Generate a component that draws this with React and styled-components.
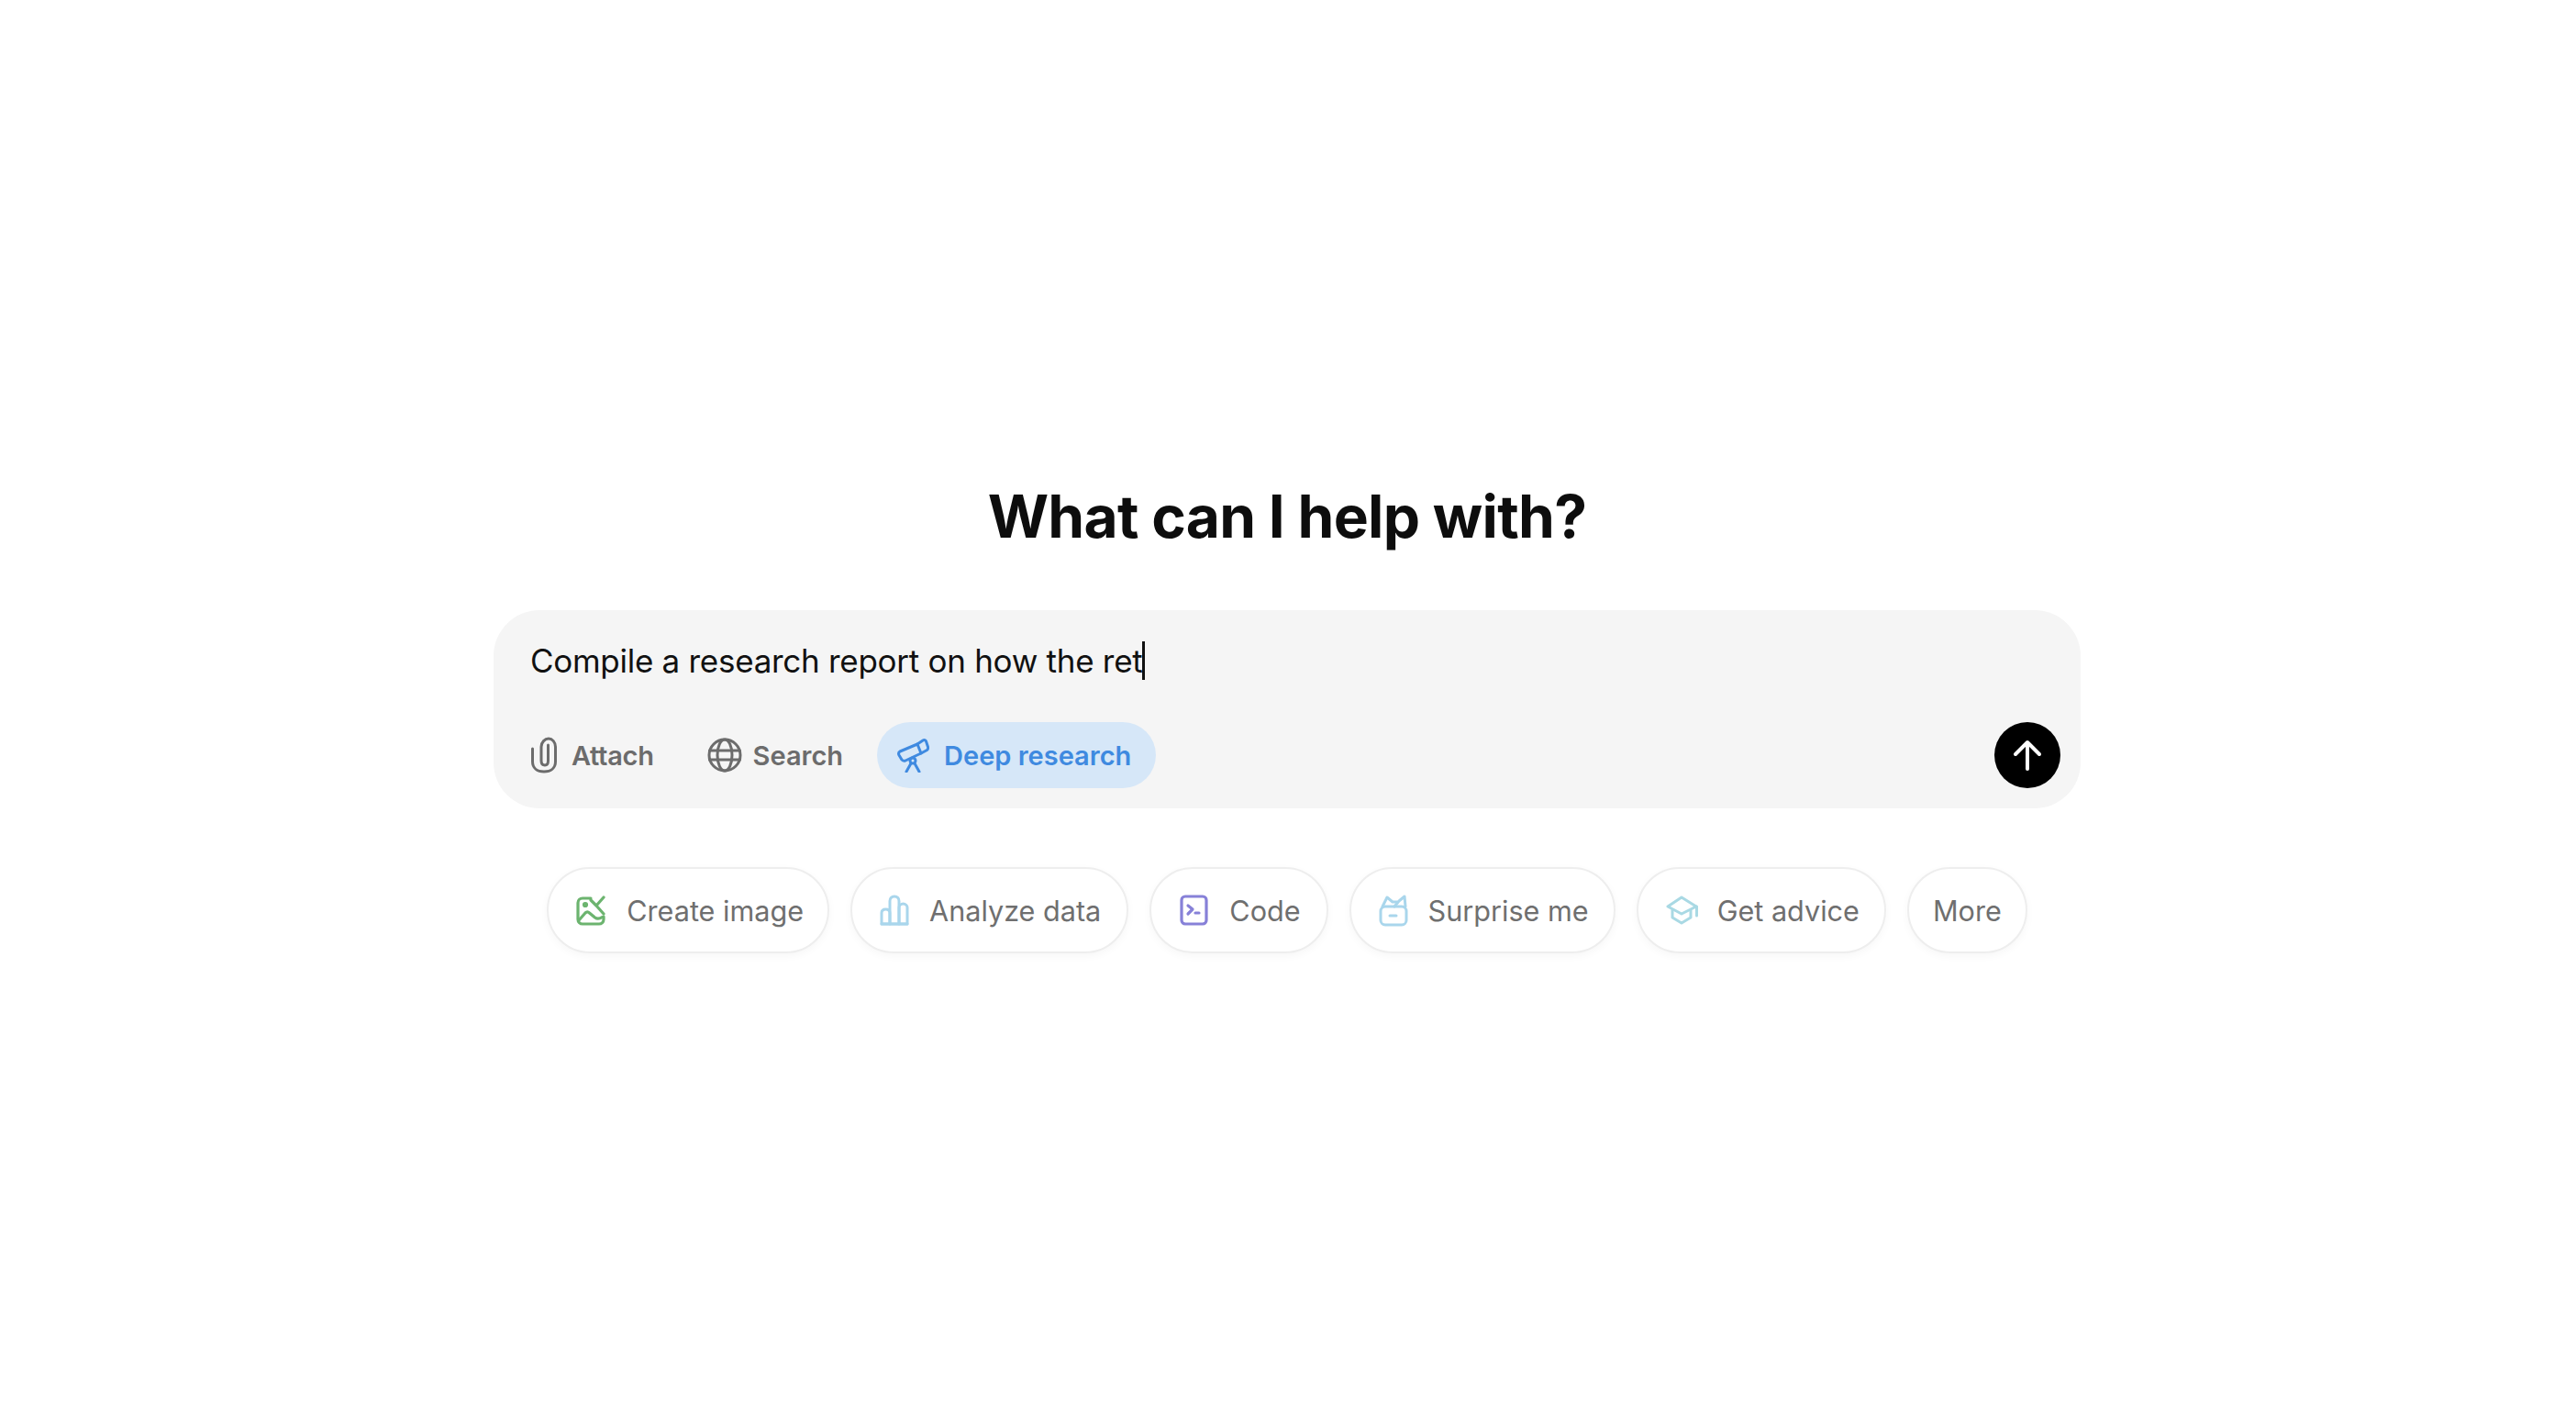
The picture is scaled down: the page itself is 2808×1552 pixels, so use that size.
import React from "react";
import styled, { createGlobalStyle } from "styled-components";

const Global = createGlobalStyle`
  html, body { margin: 0; padding: 0; background: #fff; }
  body { font-family: Inter, "Liberation Sans", sans-serif; }
`;

const Page = styled.main`
  width: 2808px;
  height: 1552px;
  box-sizing: border-box;
  padding: 518px 2px 0 0;
  display: flex;
  flex-direction: column;
  align-items: center;
  overflow: hidden;
  background: #fff;
`;

const Title = styled.h1`
  margin: 0 0 58px;
  height: 89px;
  line-height: 89px;
  font-size: 64px;
  font-weight: 700;
  letter-spacing: -0.7px;
  color: #0d0d0d;
`;

const Composer = styled.section`
  width: 1730px;
  height: 216px;
  box-sizing: border-box;
  padding: 30px 22px 22px 40px;
  background: #f5f5f5;
  border-radius: 50px;
  display: flex;
  flex-direction: column;
  justify-content: space-between;
`;

const Input = styled.div`
  height: 50px;
  line-height: 50px;
  font-size: 35px;
  letter-spacing: -0.28px;
  color: #111;
  display: flex;
  align-items: center;
`;

const Caret = styled.span`
  display: inline-block;
  width: 3px;
  height: 42px;
  background: #111;
`;

const Toolbar = styled.div`
  display: flex;
  align-items: center;
  height: 72px;
`;

const Tool = styled.button`
  height: 72px;
  border: 0;
  padding: ${(p) => p.$pad};
  margin-right: ${(p) => p.$after}px;
  border-radius: 36px;
  background: ${(p) => (p.$active ? "#d6e7f8" : "transparent")};
  color: ${(p) => (p.$active ? "#3f8ae0" : "#6c6c6c")};
  font: 600 29px Inter, "Liberation Sans", sans-serif;
  letter-spacing: ${(p) => p.$spacing ?? 0}px;
  display: flex;
  align-items: center;
  gap: ${(p) => p.$gap}px;
`;

const Send = styled.button`
  width: 72px;
  height: 72px;
  margin-left: auto;
  padding: 0;
  border: 0;
  border-radius: 50%;
  background: #000;
  display: flex;
  align-items: center;
  justify-content: center;
`;

const Chips = styled.div`
  margin-top: 64px;
  display: flex;
  gap: 23px;
`;

const Chip = styled.button`
  height: 94px;
  box-sizing: border-box;
  padding: 0 ${(p) => p.$right}px 0 ${(p) => p.$left}px;
  border: 2px solid #eeeeee;
  border-radius: 47px;
  background: #fff;
  box-shadow: 0 3px 10px rgba(0, 0, 0, 0.035);
  color: #6f6f6f;
  font: 400 30.600px Inter, "Liberation Sans", sans-serif;
  display: flex;
  align-items: center;
  gap: ${(p) => p.$gap}px;
`;

const Svg = ({ w, h, color, sw = 2.6, children }) => (
  <svg width={w} height={h} viewBox={`0 0 ${w} ${h}`} fill="none" stroke={color} strokeWidth={sw} strokeLinecap="round" strokeLinejoin="round">
    {children}
  </svg>
);

const Clip = () => (
  <Svg w={30} h={40} color="#6c6c6c" sw={3}>
    <path d="M2.500 13v14c0 7 5 11 12.500 11s12.500-4 12.500-11V11c0-5-3.500-9-7.500-9s-8 4-8 9v15c0 3 1.500 5 4 5s3.500-2 3.500-5V9" />
  </Svg>
);

const Globe = () => (
  <Svg w={38} h={38} color="#6c6c6c" sw={3}>
    <circle cx="19" cy="19" r="17" />
    <ellipse cx="19" cy="19" rx="8" ry="17" />
    <path d="M2.500 14h33M2.500 24h33" />
  </Svg>
);

const Scope = () => (
  <Svg w={36} h={38} color="#3f8ae0" sw={3}>
    <path d="M4 15l19-8 4 10-17 8c-2 1-3 0-4-1l-3-5c-1-2-.5-3 1-4z" />
    <path d="M23 7l6-4c1.500-1 3-.5 3.500 1l2 6c.5 1.500 0 2.500-1 3.500L27 17" />
    <circle cx="18" cy="25" r="3" />
    <path d="M16 28l-5 9M20 28l5 9" />
  </Svg>
);

const ImageIcon = () => (
  <Svg w={33} h={33} color="#6cb46f" sw={3.200}>
    <path d="M16 3H7a5 5 0 0 0-5 5v18a5 5 0 0 0 5 5h18a5 5 0 0 0 5-5v-3" />
    <path d="M3 27l7-8c1.500-1.500 3-1.500 4.500 0l6 5c2 1.500 5 1.500 8-.5" />
    <circle cx="10" cy="10" r="1.500" />
    <path d="M16 5l6 6M22 11l8-9M22 11l8 9" />
  </Svg>
);

const Bars = () => (
  <Svg w={32} h={34} color="#a9d6ec" sw={3}>
    <path d="M2 32V20c0-2 1-4 4.500-4S11 18 11 20v12z" />
    <path d="M11 32V7c0-3 2-5 5-5s5 2 5 5v25z" />
    <path d="M21 32V14c0-2 2-4 4.500-4s4.500 2 4.500 4v18z" />
    <path d="M2 32h28" />
  </Svg>
);

const Terminal = () => (
  <Svg w={31} h={34} color="#8781d8" sw={3.200}>
    <rect x="2" y="2" width="27" height="30" rx="4" />
    <path d="M9 12l5 4-5 5M17 20h4" />
  </Svg>
);

const Pack = () => (
  <Svg w={32} h={36} color="#a9d6ec" sw={3}>
    <rect x="2" y="14" width="28" height="20" rx="5" />
    <path d="M12 24h7" />
    <path d="M4 14l5-10 6 5 5 0" />
    <path d="M17 14l5-6 6-5 1 11" />
  </Svg>
);

const Cap = () => (
  <Svg w={36} h={32} color="#a9d9e4" sw={3}>
    <path d="M17 2L2 12l15 8 16-8z" />
    <path d="M7 16v8l10 6 10-6v-8" />
    <path d="M33.500 12v10" />
  </Svg>
);

const ArrowUp = () => (
  <svg width="32" height="36" viewBox="0 0 32 36" fill="none" stroke="#fff" strokeWidth="4" strokeLinecap="round" strokeLinejoin="round">
    <path d="M16 33V5M3 17L16 4l13 13" />
  </svg>
);

const tools = [
  { label: "Attach", icon: <Clip />, pad: "0", after: 58, gap: 15, spacing: -0.3 },
  { label: "Search", icon: <Globe />, pad: "0", after: 37, gap: 12 },
  { label: "Deep research", icon: <Scope />, pad: "0 27px 0 21px", after: 0, gap: 16, active: true },
];

const chips = [
  { label: "Create image", icon: <ImageIcon />, left: 30, right: 26, gap: 22 },
  { label: "Analyze data", icon: <Bars />, left: 30, right: 28, gap: 22 },
  { label: "Code", icon: <Terminal />, left: 31, right: 28, gap: 23 },
  { label: "Surprise me", icon: <Pack />, left: 30, right: 27, gap: 22 },
  { label: "Get advice", icon: <Cap />, left: 30, right: 27, gap: 20 },
  { label: "More", left: 26, right: 26, gap: 0 },
];

export default function App() {
  return (
    <Page>
      <Global />
      <Title>What can I help with?</Title>
      <Composer>
        <Input>
          Compile a research report on how the ret
          <Caret />
        </Input>
        <Toolbar>
          {tools.map((t) => (
            <Tool key={t.label} $pad={t.pad} $after={t.after} $gap={t.gap} $active={t.active} $spacing={t.spacing}>
              {t.icon}
              {t.label}
            </Tool>
          ))}
          <Send aria-label="Send">
            <ArrowUp />
          </Send>
        </Toolbar>
      </Composer>
      <Chips>
        {chips.map((c) => (
          <Chip key={c.label} $left={c.left} $right={c.right} $gap={c.gap}>
            {c.icon}
            {c.label}
          </Chip>
        ))}
      </Chips>
    </Page>
  );
}
